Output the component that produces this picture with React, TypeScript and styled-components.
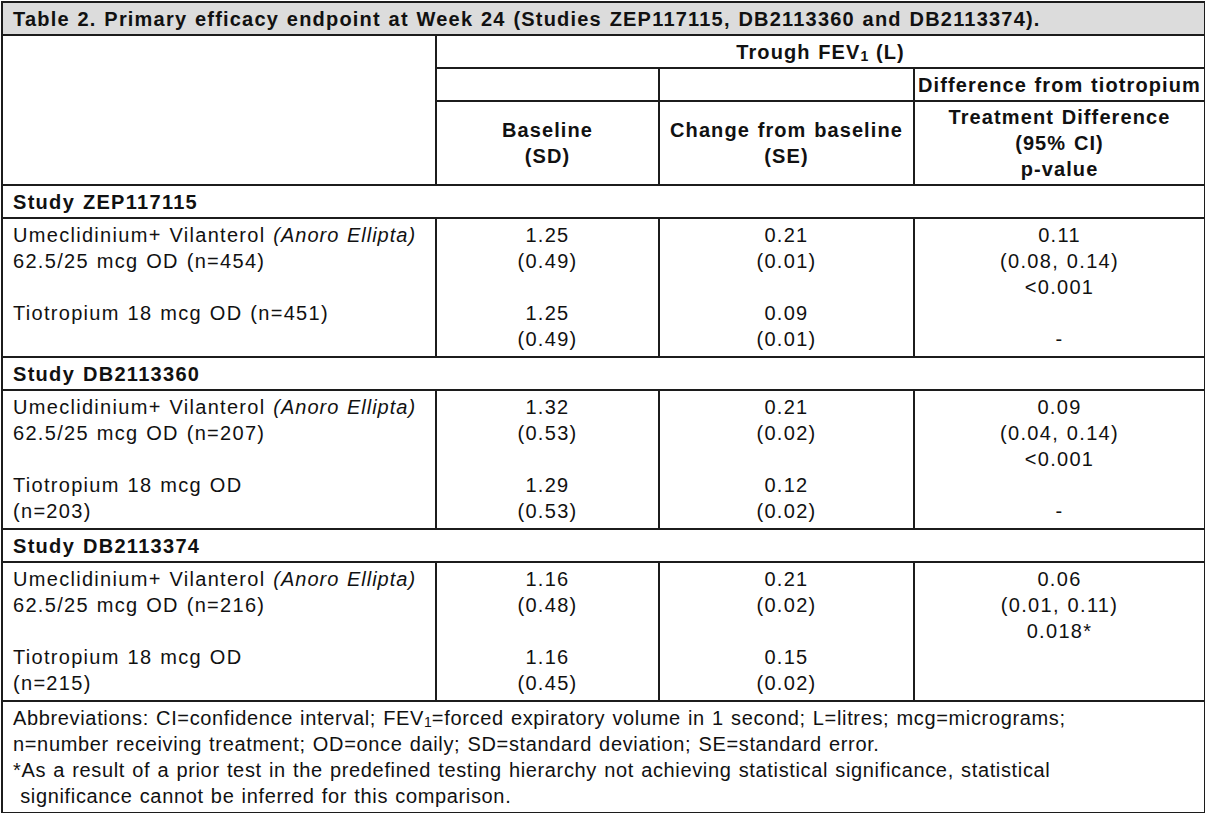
import React from 'react';
import styled, { createGlobalStyle } from 'styled-components';

const GlobalStyle = createGlobalStyle`
  html, body {
    margin: 0;
    padding: 0;
    background: #fff;
  }
  body {
    padding: 1px 0 0 1px;
    font-family: 'Liberation Sans', Arial, Helvetica, sans-serif;
    color: #111;
  }
`;

const Table = styled.table`
  width: 1203px;
  border-collapse: collapse;
  table-layout: fixed;
  font-size: 20px;
  letter-spacing: 1.3px;
  word-spacing: 1px;
  line-height: 26px;
`;

const Cell = styled.td<{ align?: 'left' | 'center' }>`
  border: 2px solid #1c1c1c;
  padding: 3px 10px 4px 10px;
  text-align: ${(p) => p.align || 'left'};
  vertical-align: top;
`;

const Italic = styled.i`
  letter-spacing: 1px;
`;

const TitleCell = styled.td`
  border: 2px solid #1c1c1c;
  background: #dcdcdc;
  font-weight: bold;
  letter-spacing: 1.2px;
  padding: 2px 10px 2px 10px;
  height: 27px;
`;

const HeadCell = styled.td<{ h?: number; tight?: boolean }>`
  border: 2px solid #1c1c1c;
  font-weight: bold;
  text-align: center;
  vertical-align: middle;
  letter-spacing: 1.1px;
  padding: ${(p) => (p.tight ? '0 2px' : '0 6px')};
  height: ${(p) => p.h || 30}px;
  white-space: nowrap;
`;

const StudyCell = styled.td`
  border: 2px solid #1c1c1c;
  font-weight: bold;
  padding: 2px 10px 2px 10px;
  height: 27px;
`;

const NoteCell = styled.td`
  border: 2px solid #1c1c1c;
  padding: 3px 10px 3px 10px;
  letter-spacing: 0.65px;
`;

const Sub = styled.sub`
  font-size: 14px;
  vertical-align: -2px;
  line-height: 0;
  letter-spacing: 0;
`;

type Arm = {
  label: React.ReactNode;
  baseline: [string, string];
  change: [string, string];
};

type Study = {
  name: string;
  active: Arm;
  comparator: Arm;
  diff: [string, string, string];
};

const umec = (n: number) => (
  <>
    Umeclidinium+ Vilanterol <Italic>(Anoro Ellipta)</Italic>
    <br />
    62.5/25 mcg OD (n={n})
  </>
);

const studies: Study[] = [
  {
    name: 'Study ZEP117115',
    active: { label: umec(454), baseline: ['1.25', '(0.49)'], change: ['0.21', '(0.01)'] },
    comparator: {
      label: (
        <>
          Tiotropium 18 mcg OD (n=451)
          <br />
          &nbsp;
        </>
      ),
      baseline: ['1.25', '(0.49)'],
      change: ['0.09', '(0.01)'],
    },
    diff: ['0.11', '(0.08, 0.14)', '<0.001'],
  },
  {
    name: 'Study DB2113360',
    active: { label: umec(207), baseline: ['1.32', '(0.53)'], change: ['0.21', '(0.02)'] },
    comparator: {
      label: (
        <>
          Tiotropium 18 mcg OD
          <br />
          (n=203)
        </>
      ),
      baseline: ['1.29', '(0.53)'],
      change: ['0.12', '(0.02)'],
    },
    diff: ['0.09', '(0.04, 0.14)', '<0.001'],
  },
  {
    name: 'Study DB2113374',
    active: { label: umec(216), baseline: ['1.16', '(0.48)'], change: ['0.21', '(0.02)'] },
    comparator: {
      label: (
        <>
          Tiotropium 18 mcg OD
          <br />
          (n=215)
        </>
      ),
      baseline: ['1.16', '(0.45)'],
      change: ['0.15', '(0.02)'],
    },
    diff: ['0.06', '(0.01, 0.11)', '0.018*'],
  },
];

const Stack: React.FC<{ lines: string[] }> = ({ lines }) => (
  <>
    {lines.map((l, i) => (
      <React.Fragment key={i}>
        {i > 0 && <br />}
        {l || '\u00a0'}
      </React.Fragment>
    ))}
  </>
);

const StudyRows: React.FC<{ study: Study; last: boolean }> = ({ study, last }) => (
  <>
    <tr>
      <StudyCell colSpan={4}>{study.name}</StudyCell>
    </tr>
    <tr>
      <Cell>
        {study.active.label}
        <br />
        &nbsp;
        <br />
        {study.comparator.label}
      </Cell>
      <Cell align="center">
        <Stack lines={[...study.active.baseline, '', ...study.comparator.baseline]} />
      </Cell>
      <Cell align="center">
        <Stack lines={[...study.active.change, '', ...study.comparator.change]} />
      </Cell>
      <Cell align="center">
        <Stack lines={[...study.diff, '', last ? '' : '-']} />
      </Cell>
    </tr>
  </>
);

const App: React.FC = () => (
  <>
    <GlobalStyle />
    <Table>
      <colgroup>
        <col style={{ width: 434 }} />
        <col style={{ width: 223 }} />
        <col style={{ width: 255 }} />
        <col style={{ width: 291 }} />
      </colgroup>
      <tbody>
        <tr>
          <TitleCell colSpan={4}>
            Table 2. Primary efficacy endpoint at Week 24 (Studies ZEP117115, DB2113360 and DB2113374).
          </TitleCell>
        </tr>
        <tr>
          <HeadCell rowSpan={3} />
          <HeadCell colSpan={3} h={31}>
            Trough FEV<Sub>1</Sub> (L)
          </HeadCell>
        </tr>
        <tr>
          <HeadCell h={31} />
          <HeadCell h={31} />
          <HeadCell h={31} tight>
            Difference from tiotropium
          </HeadCell>
        </tr>
        <tr>
          <HeadCell h={82}>
            Baseline
            <br />
            (SD)
          </HeadCell>
          <HeadCell h={82}>
            Change from baseline
            <br />
            (SE)
          </HeadCell>
          <HeadCell h={82} tight>
            Treatment Difference
            <br />
            (95% CI)
            <br />
            p-value
          </HeadCell>
        </tr>
        {studies.map((s, i) => (
          <StudyRows key={s.name} study={s} last={i === studies.length - 1} />
        ))}
        <tr>
          <NoteCell colSpan={4}>
            Abbreviations: CI=confidence interval; FEV<Sub>1</Sub>=forced expiratory volume in 1 second; L=litres;
            mcg=micrograms;
            <br />
            n=number receiving treatment; OD=once daily; SD=standard deviation; SE=standard error.
            <br />
            *As a result of a prior test in the predefined testing hierarchy not achieving statistical significance,
            statistical
            <br />
            &nbsp;significance cannot be inferred for this comparison.
          </NoteCell>
        </tr>
      </tbody>
    </Table>
  </>
);

export default App;
